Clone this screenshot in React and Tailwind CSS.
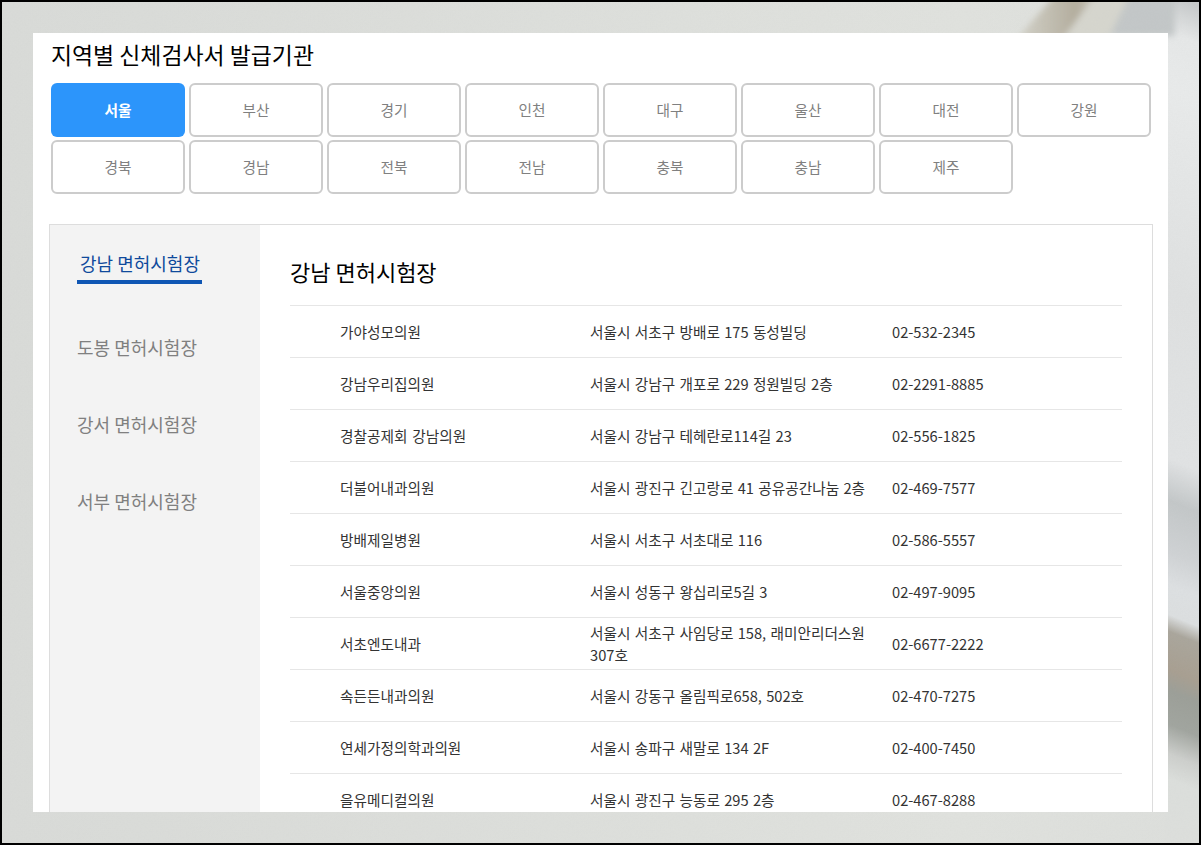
const FONT = "font-['Noto_Sans_CJK_KR','Noto_Sans',sans-serif]";

const regions = [
  ['서울', '부산', '경기', '인천', '대구', '울산', '대전', '강원'],
  ['경북', '경남', '전북', '전남', '충북', '충남', '제주'],
];

const centers = ['도봉 면허시험장', '강서 면허시험장', '서부 면허시험장'];

const clinics = [
  ['가야성모의원', '서울시 서초구 방배로 175 동성빌딩', '02-532-2345'],
  ['강남우리집의원', '서울시 강남구 개포로 229 정원빌딩 2층', '02-2291-8885'],
  ['경찰공제회 강남의원', '서울시 강남구 테헤란로114길 23', '02-556-1825'],
  ['더불어내과의원', '서울시 광진구 긴고랑로 41 공유공간나눔 2층', '02-469-7577'],
  ['방배제일병원', '서울시 서초구 서초대로 116', '02-586-5557'],
  ['서울중앙의원', '서울시 성동구 왕십리로5길 3', '02-497-9095'],
  ['서초엔도내과', '서울시 서초구 사임당로 158, 래미안리더스원 307호', '02-6677-2222'],
  ['속든든내과의원', '서울시 강동구 올림픽로658, 502호', '02-470-7275'],
  ['연세가정의학과의원', '서울시 송파구 새말로 134 2F', '02-400-7450'],
  ['을유메디컬의원', '서울시 광진구 능동로 295 2층', '02-467-8288'],
];

// photo behind the card, only its edges show
function Backdrop() {
  return (
    <svg className="absolute inset-0 w-full h-full" viewBox="0 0 1201 845" preserveAspectRatio="none">
      <defs>
        <linearGradient id="base" x1="0" y1="0" x2="1" y2="0">
          <stop offset="0" stopColor="#d9dbd8" />
          <stop offset="0.8" stopColor="#e0e2de" />
          <stop offset="1" stopColor="#dddfdc" />
        </linearGradient>
        <linearGradient id="side" gradientUnits="userSpaceOnUse" x1="1184" y1="0" x2="893" y2="728">
          <stop offset="0" stopColor="#c6c9ca" />
          <stop offset="0.045" stopColor="#e6e8e8" />
          <stop offset="0.11" stopColor="#e9ebeb" />
          <stop offset="0.35" stopColor="#dfe1e1" />
          <stop offset="0.55" stopColor="#e1e3e4" />
          <stop offset="0.6" stopColor="#c3c7c8" />
          <stop offset="0.66" stopColor="#cfd2d4" />
          <stop offset="0.7" stopColor="#dde0e2" />
          <stop offset="0.735" stopColor="#dcdfe0" />
          <stop offset="0.755" stopColor="#a9a59b" />
          <stop offset="0.8" stopColor="#a79e90" />
          <stop offset="0.825" stopColor="#9b9e97" />
          <stop offset="0.865" stopColor="#a0a49e" />
          <stop offset="0.9" stopColor="#cdcfcc" />
          <stop offset="0.93" stopColor="#dcdfdc" />
          <stop offset="1" stopColor="#dddfdc" />
        </linearGradient>
        <linearGradient id="streak" x1="0" y1="0" x2="1" y2="0">
          <stop offset="0" stopColor="#d4d3ca" />
          <stop offset="0.75" stopColor="#b3ad9d" />
          <stop offset="1" stopColor="#c8c6bb" />
        </linearGradient>
        <filter id="soft" x="-20%" y="-20%" width="140%" height="140%">
          <feGaussianBlur stdDeviation="3" />
        </filter>
        <filter id="grain">
          <feTurbulence type="fractalNoise" baseFrequency="0.6" numOctaves="2" />
          <feColorMatrix values="0 0 0 0 0.5  0 0 0 0 0.5  0 0 0 0 0.5  0.6 0 0 0 0" />
        </filter>
      </defs>
      <rect width="1201" height="845" fill="url(#base)" />
      <rect x="1165" width="36" height="845" fill="url(#side)" />
      <g filter="url(#soft)">
        <rect x="1105" y="-6" width="70" height="42" fill="#c3c7c8" />
        <path d="M1095 -6 L1130 -6 L1108 40 L1060 40 Z" fill="#d6d6ce" />
        <path d="M1056 -6 L1096 -6 L1062 40 L1016 40 Z" fill="url(#streak)" />
      </g>
      <rect width="1201" height="845" filter="url(#grain)" opacity="0.12" />
    </svg>
  );
}

function RegionTab({ name, active }) {
  return (
    <button
      className={
        active
          ? 'w-[134px] h-[54px] rounded-md bg-[#2c95fb] text-white font-bold text-[14.67px]'
          : 'w-[134px] h-[54px] rounded-md bg-white border-2 border-[#cccccc] text-[#808080] text-[14.67px]'
      }
    >
      {name}
    </button>
  );
}

function ClinicRow({ name, address, phone }) {
  return (
    <div className="flex items-center h-[52px] border-t border-[#e6e6e6] text-[14.67px] leading-[22px] text-[#333333]">
      <div className="w-[300px] pl-[50px] [word-spacing:1.5px]">{name}</div>
      <div className="w-[302px] pr-6 [word-spacing:1px]">{address}</div>
      <div>{phone}</div>
    </div>
  );
}

export default function App() {
  return (
    <div className={`relative w-[1201px] h-[845px] overflow-hidden ${FONT}`}>
      <Backdrop />
      {/* window frame */}
      <div className="relative h-full border-2 border-black p-[31px]">
        <div className="h-full bg-white overflow-hidden pl-[16px] pr-[15px]">
          <h2 className="pl-[2px] pt-[4px] h-[50px] text-[22.9px] leading-[34px] text-black whitespace-nowrap">지역별 신체검사서 발급기관</h2>

          {/* Region tabs */}
          <div className="flex flex-col gap-[3px] pl-[2px]">
            {regions.map((row, i) => (
              <div key={i} className="flex gap-1">
                {row.map((name) => (
                  <RegionTab key={name} name={name} active={name === '서울'} />
                ))}
              </div>
            ))}
          </div>

          {/* Test centers + clinic list */}
          <div className="flex mt-[30px] border border-[#dddddd] h-[700px]">
            <div className="w-[210px] shrink-0 bg-[#f3f3f3] pl-[27px] pt-[23px] text-[18px] leading-[30px] text-[#808080]">
              <div className="w-[125px] h-[36px] px-[3px] whitespace-nowrap border-b-[4px] border-[#0f56b3] text-[#0f4a9c]">강남 면허시험장</div>
              <div className="flex flex-col gap-[47px] mt-[48px]">
                {centers.map((c) => (
                  <div key={c}>{c}</div>
                ))}
              </div>
            </div>
            <div className="flex-1 px-[30px]">
              <h3 className="h-[80px] pt-[29px] text-[22px] leading-[34px] text-black">강남 면허시험장</h3>
              {clinics.map((c) => (
                <ClinicRow key={c[0]} name={c[0]} address={c[1]} phone={c[2]} />
              ))}
            </div>
          </div>
        </div>
      </div>
    </div>
  );
}
